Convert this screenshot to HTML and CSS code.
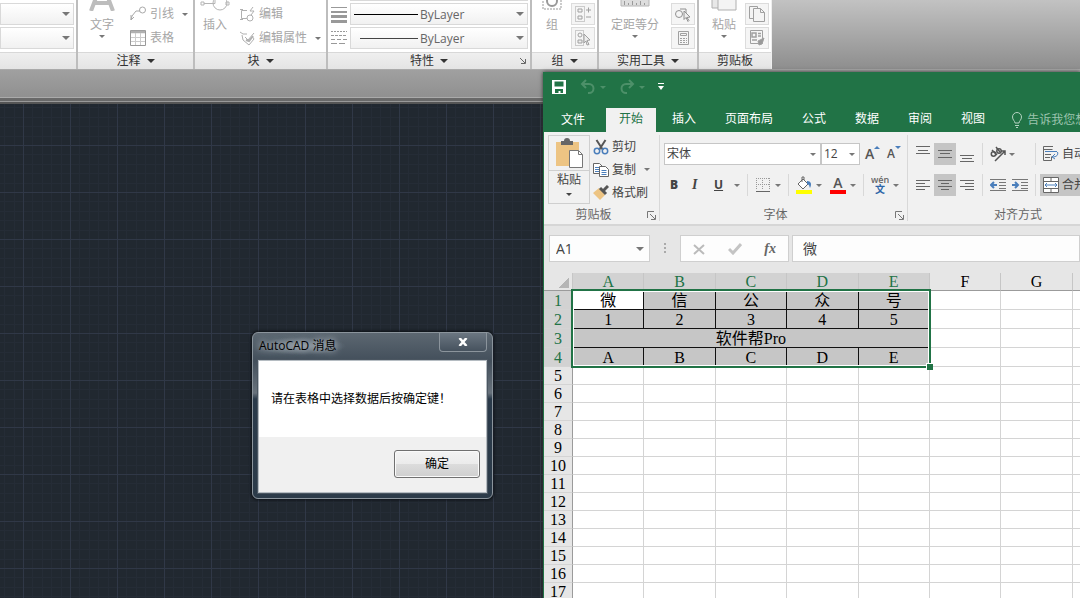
FILE: index.html
```html
<!DOCTYPE html>
<html lang="zh-CN">
<head>
    <meta charset="UTF-8">
    <meta name="viewport" content="width=device-width, initial-scale=1.0">
    <title>AutoCAD</title>
    <link rel="stylesheet" href="styles.css">
</head>
<body>
    <div class="cad">
        <div class="cad-ribbon">
            <section class="panel panel-layer">
                <div class="panel-body stack">
                    <div class="combo"><select aria-label="图层状态"><option></option></select><i class="caret big"></i></div>
                    <div class="combo"><select aria-label="图层"><option></option></select><i class="caret big"></i></div>
                </div>
                <div class="panel-title"></div>
            </section>
            <section class="panel panel-note">
                <div class="panel-body">
                    <button class="large">
                        <svg width="26" height="24" viewBox="0 0 26 24"><path d="M2 24L11 0h4l9 24M6 16h14" fill="none" stroke="#bdbdbd" stroke-width="4"/></svg>
                        <span>文字</span><i class="caret"></i>
                    </button>
                    <div class="small-list">
                        <button class="small">
                            <svg width="16" height="16" viewBox="0 0 16 16" fill="none" stroke="#a8a8a8"><path d="M1 14l1-4 4-5h4M1 14V9M1 14l3-3"/><circle cx="12.500" cy="4" r="3"/></svg>
                            <span>引线</span><i class="caret"></i>
                        </button>
                        <button class="small">
                            <svg width="16" height="16" viewBox="0 0 16 16" fill="none" stroke="#b0b0b0"><path d="M.5.5h15v15H.5z" stroke="#999"/><path d="M1 2h14" stroke-width="2.500"/><path d="M1 7.500h14M1 11.500h14M5.500 3v12M10.500 3v12" stroke="#ccc"/></svg>
                            <span>表格</span>
                        </button>
                    </div>
                </div>
                <div class="panel-title">注释<i class="caret big"></i></div>
            </section>
            <section class="panel panel-block">
                <div class="panel-body">
                    <button class="large">
                        <svg width="30" height="24" viewBox="0 0 30 24" fill="none" stroke="#b5b5b5"><path d="M1 15h3v3H1zM26 15h3v3h-3zM4 16.500h11V10"/><circle cx="20" cy="16" r="7"/></svg>
                        <span>插入</span><i class="caret none"></i>
                    </button>
                    <div class="small-list">
                        <button class="small">
                            <svg width="16" height="16" viewBox="0 0 16 16" fill="none" stroke="#b0b0b0"><path d="M8 4.500H2.500v8H8M1 3.500h3M1 13.500h3M14 1l-3 4h4l-3 4"/><circle cx="11" cy="12" r="3"/></svg>
                            <span>编辑</span>
                        </button>
                        <button class="small">
                            <svg width="16" height="16" viewBox="0 0 16 16" fill="none" stroke="#b0b0b0"><path d="M1 2l3 2h4M3 5l1 5 6 5 5-6-2-3M6 7l3 3 6-7"/><path d="M7 10l3 1 4-5" stroke-width="2"/></svg>
                            <span>编辑属性</span><i class="caret"></i>
                        </button>
                    </div>
                </div>
                <div class="panel-title">块<i class="caret big"></i></div>
            </section>
            <section class="panel panel-prop">
                <div class="panel-body stack">
                    <div class="prop-row"><svg width="16" height="22"></svg><div class="combo"></div></div>
                    <div class="prop-row">
                        <svg width="16" height="22" viewBox="0 0 16 22" stroke="#999"><path d="M0 4.500h16"/><path d="M0 9h16" stroke-width="2"/><path d="M0 13.500h16" stroke-width="3"/><path d="M0 18.500h16" stroke-width="3"/></svg>
                        <div class="combo"><span class="weight"></span><select aria-label="线宽"><option>ByLayer</option></select><i class="caret big"></i></div>
                    </div>
                    <div class="prop-row">
                        <svg width="16" height="22" viewBox="0 0 16 22" stroke="#999"><path d="M0 4.500h16" stroke-dasharray="2 1"/><path d="M0 8.500h16" stroke-dasharray="3 1"/><path d="M0 12.500h16" stroke-dasharray="4 2"/><path d="M0 16.500h16" stroke-dasharray="6 2"/></svg>
                        <div class="combo"><span class="weight thin"></span><select aria-label="线型"><option>ByLayer</option></select><i class="caret big"></i></div>
                    </div>
                </div>
                <div class="panel-title">特性<i class="caret big"></i>
                    <svg class="launch" width="6" height="6" viewBox="0 0 6 6" fill="none" stroke="#666"><path d="M0 0l5 5M5.500 1v4.500H1"/></svg>
                </div>
            </section>
            <section class="panel panel-group">
                <div class="panel-body">
                    <button class="large">
                        <svg width="20" height="24" viewBox="0 0 20 24" fill="none" stroke="#999"><path d="M1 2v20h18V2" stroke-dasharray="2 1"/><circle cx="10" cy="14" r="5" stroke-width="2"/></svg>
                        <span>组</span><i class="caret none"></i>
                    </button>
                    <div class="tool-list">
                        <button class="tool" aria-label="组编辑"><svg width="16" height="16" viewBox="0 0 16 16" fill="none" stroke="#a0a0a0"><path d="M.5.5h9v15h-9z" stroke-dasharray="1 1"/><path d="M3 3h4v3H3zM3 10h4v3H3zM11 4h5M13.500 1.500v5M11 11h5"/></svg></button>
                        <button class="tool" aria-label="组选择"><svg width="16" height="16" viewBox="0 0 16 16" fill="none" stroke="#a0a0a0"><path d="M.5.5h8v15h-8z" stroke-dasharray="1 1"/><circle cx="5" cy="5" r="2"/><path d="M3 10h4v3H3zM9 4l6 6-3 .5 2 4-2 .5-1-4-2 2z" fill="#eee"/></svg></button>
                    </div>
                </div>
                <div class="panel-title">组<i class="caret big"></i></div>
            </section>
            <section class="panel panel-util">
                <div class="panel-body">
                    <button class="large">
                        <svg width="30" height="24" viewBox="0 0 30 24"><path d="M1 8h28v11H1z" fill="#ddd" stroke="#b5b5b5"/><path d="M4.500 14v4M8.500 16v2M12.500 14v4M16.500 16v2M20.500 14v4M24.500 16v2" stroke="#999"/></svg>
                        <span>定距等分</span><i class="caret"></i>
                    </button>
                    <div class="tool-list">
                        <button class="tool" aria-label="快速选择"><svg width="16" height="16" viewBox="0 0 16 16" fill="none" stroke="#909090"><path d="M5 3h6v6"/><circle cx="4" cy="8" r="3.500"/><path d="M9 5l6 6-3 .5 2 3-1 1-2-4-2 2z" fill="#eee"/></svg></button>
                        <button class="tool" aria-label="计算器"><svg width="16" height="16" viewBox="0 0 16 16" fill="none" stroke="#a0a0a0"><path d="M3.500 1.500h10v13h-10zM5.500 3.500h6v2h-6z"/><path d="M5 8.500h7M5 10.500h7M5 12.500h7" stroke-dasharray="2 1"/></svg></button>
                    </div>
                </div>
                <div class="panel-title">实用工具<i class="caret big"></i></div>
            </section>
            <section class="panel panel-clip">
                <div class="panel-body">
                    <button class="large">
                        <svg width="26" height="24" viewBox="0 0 26 24" fill="#e8e8e8" stroke="#b0b0b0"><path d="M1 5h16v16H1z"/><path d="M7 10h18v13H7z" fill="#f4f4f4"/></svg>
                        <span>粘贴</span><i class="caret"></i>
                    </button>
                    <div class="tool-list">
                        <button class="tool" aria-label="复制"><svg width="16" height="16" viewBox="0 0 16 16" fill="#f4f4f4" stroke="#a0a0a0"><path d="M.5.500h8v12h-8z"/><path d="M4.500 2.500h7l4 4v9h-11zM11.500 2.500v4h4"/></svg></button>
                        <button class="tool" aria-label="特性匹配"><svg width="16" height="16" viewBox="0 0 16 16" fill="none" stroke="#a0a0a0"><path d="M1.500.5h12v13h-12z"/><path d="M3 3h4v4H3zM9 3.500h3M9 6h3M3 10h5" stroke-width="1.500"/><path d="M15 8l-6 3 1 4 3-1z" fill="#999"/></svg></button>
                    </div>
                </div>
                <div class="panel-title">剪贴板</div>
            </section>
        </div>
        <div class="cad-bar"></div>
        <div class="cad-canvas"></div>
    </div>

    <div class="dialog" role="dialog" aria-labelledby="dialog-title">
        <div class="dialog-head">
            <h1 id="dialog-title">AutoCAD 消息</h1>
            <button class="dialog-close" aria-label="关闭">
                <svg width="10" height="8" viewBox="0 0 10 8"><path d="M1.500 0L8.500 8M8.500 0L1.500 8" stroke="#fff" stroke-width="2.500"/></svg>
            </button>
        </div>
        <div class="dialog-body">
            <p>请在表格中选择数据后按确定键！</p>
            <div class="dialog-foot"><button class="ok">确定</button></div>
        </div>
    </div>

    <div class="excel">
        <div class="quick">
            <button aria-label="保存"><svg width="16" height="16" viewBox="0 0 16 16"><path d="M1 1h14v14H1z" fill="#fff"/><path d="M3.500 2.500h9v5h-9zM4 10h8v4H9.500v-2h-2v2H4z" fill="#217346"/></svg></button>
            <button class="dim" aria-label="撤消"><svg width="16" height="16" viewBox="0 0 16 16" fill="none" stroke="#4d9069" stroke-width="2"><path d="M6 1L2 5l4 4M2 5h7a4 4 0 010 9H8"/></svg><i class="caret"></i></button>
            <button class="dim" aria-label="恢复"><svg width="16" height="16" viewBox="0 0 16 16" fill="none" stroke="#4d9069" stroke-width="2"><path d="M10 1l4 4-4 4M14 5H7a4 4 0 000 9h1"/></svg><i class="caret"></i></button>
            <button class="custom" aria-label="自定义快速访问工具栏"><svg width="6" height="8" viewBox="0 0 6 8"><path d="M0 .5h6" stroke="#fff"/><path d="M0 3h6L3 7z" fill="#fff"/></svg></button>
        </div>
        <nav class="tabs">
            <button class="file">文件</button>
            <button class="active">开始</button>
            <button>插入</button>
            <button>页面布局</button>
            <button>公式</button>
            <button>数据</button>
            <button>审阅</button>
            <button>视图</button>
            <button class="tell"><svg width="10" height="16" viewBox="0 0 10 16" fill="none" stroke="#b5d3c2"><path d="M3 11c0-2-2.500-3-2.500-6a4.500 4.500 0 019 0c0 3-2.500 4-2.500 6zM3 13.500h4M4 15.500h2"/></svg><span>告诉我您想要做什么...</span></button>
        </nav>
        <div class="ribbon">
            <section class="group group-clip">
                <div class="group-body">
                    <button class="paste">
                        <span class="paste-icon"><svg width="30" height="30" viewBox="0 0 30 30"><path d="M2 4h23v24H2z" fill="#edc483"/><path d="M7 7V3h3a3 3 0 016 0h3v4z" fill="#666"/><path d="M15.500 12.500h9l4 4v13h-13z" fill="#fff" stroke="#777"/><path d="M24.500 12.500v4h4" fill="none" stroke="#777"/></svg></span>
                        <span>粘贴</span><i class="caret dark"></i>
                    </button>
                    <div class="clip-list">
                        <button><svg width="16" height="16" viewBox="0 0 16 16" fill="none"><path d="M3.500 1L10 11M12.500 1L6 11" stroke="#555" stroke-width="2"/><circle cx="4" cy="12" r="2.700" stroke="#4a7ebb" stroke-width="1.500"/><circle cx="12" cy="12" r="2.700" stroke="#4a7ebb" stroke-width="1.500"/></svg><span>剪切</span></button>
                        <button><svg width="16" height="16" viewBox="0 0 16 16" fill="#fff" stroke="#666"><path d="M.5 1.500h6l3 3v7h-9z"/><path d="M2 5.500h4M2 7.500h4M2 9.500h4" stroke="#4a7ebb"/><path d="M6.500 4.500h6l3 3v7h-9z"/><path d="M8.500 8.500h5M8.500 10.500h5M8.500 12.500h5" stroke="#4a7ebb"/></svg><span>复制</span><i class="caret"></i></button>
                        <button><svg width="16" height="16" viewBox="0 0 16 16"><path d="M6 3l6 7-5 5L0 8z" fill="#edc483"/><path d="M7 3l6 6" stroke="#555" stroke-width="3"/><path d="M10 6l5-5" stroke="#555" stroke-width="3"/></svg><span>格式刷</span></button>
                    </div>
                </div>
                <div class="group-label"><span>剪贴板</span><svg width="9" height="9" viewBox="0 0 9 9" fill="none" stroke="#777"><path d="M.5 7V.5H7M3 3l5 5M8.500 4v4.500H4"/></svg></div>
            </section>
            <section class="group group-font">
                <div class="group-body rows">
                    <div class="row">
                        <div class="box font-name"><select aria-label="字体"><option>宋体</option></select><i class="caret"></i></div>
                        <div class="box font-size"><select aria-label="字号"><option>12</option></select><i class="caret"></i></div>
                        <button class="grow" aria-label="增大字号"><b>A</b><i class="up"></i></button>
                        <button class="grow shrink" aria-label="减小字号"><b>A</b><i class="down"></i></button>
                    </div>
                    <div class="row styles">
                        <button class="letter"><b>B</b></button>
                        <button class="letter italic"><b>I</b></button>
                        <button class="letter"><u>U</u></button>
                        <i class="caret"></i><i class="sep"></i>
                        <button aria-label="边框"><svg width="16" height="16" viewBox="0 0 16 16" stroke="#999"><path d="M1 1.500h14M1 7.500h14M1.500 1v12M7.500 1v12M14.500 1v12" stroke-dasharray="1 1"/><path d="M1 14.500h14" stroke="#666"/></svg></button>
                        <i class="caret"></i><i class="sep"></i>
                        <button aria-label="填充颜色"><svg width="16" height="18" viewBox="0 0 16 18"><path d="M2 8l5-5 5 5-5 5z" fill="#fff" stroke="#666"/><path d="M6 6V1h2v3" fill="none" stroke="#666"/><path d="M11 5c4 0 5 3 3 7-1-2 0-3-3-4z" fill="#4a7ebb"/><path d="M0 14h16v4H0z" fill="#ff0"/></svg></button>
                        <i class="caret"></i>
                        <button class="color" aria-label="字体颜色"><b>A</b></button>
                        <i class="caret"></i><i class="sep"></i>
                        <button class="pinyin" aria-label="拼音"><svg width="18" height="18" viewBox="0 0 18 18"><text x="9" y="7" text-anchor="middle" font-size="9" font-weight="600" fill="#666">wén</text><text x="9" y="17" text-anchor="middle" font-size="10" font-weight="bold" fill="#2e67a8">文</text></svg></button>
                        <i class="caret"></i>
                    </div>
                </div>
                <div class="group-label"><span>字体</span><svg width="9" height="9" viewBox="0 0 9 9" fill="none" stroke="#777"><path d="M.5 7V.5H7M3 3l5 5M8.500 4v4.500H4"/></svg></div>
            </section>
            <section class="group group-align">
                <div class="group-body rows">
                    <div class="row">
                        <button class="sq" aria-label="顶端对齐"><svg width="14" height="16" viewBox="0 0 14 16" stroke="#666"><path d="M0 .500h14M2 4.500h10M0 7.500h14"/></svg></button>
                        <button class="sq on" aria-label="垂直居中"><svg width="14" height="16" viewBox="0 0 14 16" stroke="#666"><path d="M0 4.500h14M2 7.500h10M0 11.500h14"/></svg></button>
                        <button class="sq" aria-label="底端对齐"><svg width="14" height="16" viewBox="0 0 14 16" stroke="#666"><path d="M0 9.500h14M2 12.500h10M0 15.500h14"/></svg></button>
                        <i class="sep"></i>
                        <button class="sq" aria-label="方向"><svg width="16" height="16" viewBox="0 0 16 16" fill="none" stroke="#555"><circle cx="3.500" cy="8" r="2.200" stroke-width="1.500"/><path d="M2 4l5 5M6 1l4 5M5 15L15 5M15 9V5h-4" stroke-width="1.500"/><circle cx="9" cy="5" r="2.200" stroke-width="1.500"/></svg></button>
                        <i class="caret"></i><i class="sep wide"></i>
                        <button class="text-btn"><svg width="16" height="16" viewBox="0 0 16 16" fill="none" stroke="#666"><path d="M10 .5H.5v14h8v-4M.5 3.500h9M2 8.500h6M2 11.500h5"/><path d="M2 5.500h12M14.500 6c1 3-1 5-5 5M12 8l-3 3 3 2" stroke="#4a7ebb"/></svg><span>自动换行</span></button>
                    </div>
                    <div class="row">
                        <button class="sq" aria-label="左对齐"><svg width="14" height="16" viewBox="0 0 14 16" stroke="#666"><path d="M0 3.500h14M0 6.500h9M0 9.500h14M0 12.500h9"/></svg></button>
                        <button class="sq on" aria-label="居中"><svg width="14" height="16" viewBox="0 0 14 16" stroke="#666"><path d="M0 3.500h14M3 6.500h8M0 9.500h14M3 12.500h8"/></svg></button>
                        <button class="sq" aria-label="右对齐"><svg width="14" height="16" viewBox="0 0 14 16" stroke="#666"><path d="M0 3.500h14M5 6.500h9M0 9.500h14M5 12.500h9"/></svg></button>
                        <i class="sep"></i>
                        <button class="sq" aria-label="减少缩进"><svg width="16" height="16" viewBox="0 0 16 16" fill="none" stroke="#777"><path d="M0 2.500h16M9 5.500h7M9 8.500h7M9 11.500h7M0 13.500h16"/><path d="M7 8H1M4 5L1 8l3 3" stroke="#4a7ebb" stroke-width="2"/></svg></button>
                        <button class="sq" aria-label="增加缩进"><svg width="16" height="16" viewBox="0 0 16 16" fill="none" stroke="#777"><path d="M0 2.500h16M9 5.500h7M9 8.500h7M9 11.500h7M0 13.500h16"/><path d="M0 8h6M3 5l3 3-3 3" stroke="#4a7ebb" stroke-width="2"/></svg></button>
                        <i class="sep"></i>
                        <button class="text-btn on"><svg width="16" height="16" viewBox="0 0 16 16" fill="#fff" stroke="#666"><path d="M.5.500h15v15H.5zM.5 4.500h15M.5 11.500h15M8 .5v4M8 11.500v4"/><path d="M2 8h12M4 6L2 8l2 2M12 6l2 2-2 2" fill="none" stroke="#4a7ebb"/></svg><span>合并后居中</span></button>
                    </div>
                </div>
                <div class="group-label"><span>对齐方式</span></div>
            </section>
        </div>
        <div class="formula">
            <div class="name-box"><input type="text" value="A1" aria-label="名称框"><i class="caret big"></i></div>
            <span class="dots"></span>
            <div class="fx">
                <button aria-label="取消"><svg width="12" height="12" viewBox="0 0 12 12"><path d="M1 2l10 9M11 2L1 11" stroke="#bbb" stroke-width="2"/></svg></button>
                <button aria-label="输入"><svg width="14" height="12" viewBox="0 0 14 12" fill="none"><path d="M1 6l4 4 8-9" stroke="#c4c4c4" stroke-width="3"/></svg></button>
                <button class="fn">fx</button>
            </div>
            <input class="formula-input" type="text" value="微" aria-label="编辑栏">
        </div>
        <div class="sheet">
            <table>
                <thead>
                    <tr><th class="corner"></th><th class="sel">A</th><th class="sel">B</th><th class="sel">C</th><th class="sel">D</th><th class="sel">E</th><th>F</th><th>G</th><th>H</th></tr>
                </thead>
                <tbody>
                    <tr class="data"><th>1</th><td class="cell current">微</td><td class="cell">信</td><td class="cell">公</td><td class="cell">众</td><td class="cell">号</td><td></td><td></td><td></td></tr>
                    <tr class="data"><th>2</th><td class="cell">1</td><td class="cell">2</td><td class="cell">3</td><td class="cell">4</td><td class="cell">5</td><td></td><td></td><td></td></tr>
                    <tr class="data"><th>3</th><td class="cell" colspan="5">软件帮Pro</td><td></td><td></td><td></td></tr>
                    <tr class="data"><th>4</th><td class="cell">A</td><td class="cell">B</td><td class="cell">C</td><td class="cell">D</td><td class="cell">E</td><td></td><td></td><td></td></tr>
                    <tr><th>5</th><td></td><td></td><td></td><td></td><td></td><td></td><td></td><td></td></tr>
                    <tr><th>6</th><td></td><td></td><td></td><td></td><td></td><td></td><td></td><td></td></tr>
                    <tr><th>7</th><td></td><td></td><td></td><td></td><td></td><td></td><td></td><td></td></tr>
                    <tr><th>8</th><td></td><td></td><td></td><td></td><td></td><td></td><td></td><td></td></tr>
                    <tr><th>9</th><td></td><td></td><td></td><td></td><td></td><td></td><td></td><td></td></tr>
                    <tr><th>10</th><td></td><td></td><td></td><td></td><td></td><td></td><td></td><td></td></tr>
                    <tr><th>11</th><td></td><td></td><td></td><td></td><td></td><td></td><td></td><td></td></tr>
                    <tr><th>12</th><td></td><td></td><td></td><td></td><td></td><td></td><td></td><td></td></tr>
                    <tr><th>13</th><td></td><td></td><td></td><td></td><td></td><td></td><td></td><td></td></tr>
                    <tr><th>14</th><td></td><td></td><td></td><td></td><td></td><td></td><td></td><td></td></tr>
                    <tr><th>15</th><td></td><td></td><td></td><td></td><td></td><td></td><td></td><td></td></tr>
                    <tr><th>16</th><td></td><td></td><td></td><td></td><td></td><td></td><td></td><td></td></tr>
                    <tr><th>17</th><td></td><td></td><td></td><td></td><td></td><td></td><td></td><td></td></tr>
                </tbody>
            </table>
            <div class="selection"></div>
        </div>
    </div>
</body>
</html>
```
FILE: styles.css
```css
* {
    margin: 0;
    padding: 0;
    box-sizing: border-box;
}
body {
    position: relative;
    height: 100vh;
    overflow: hidden;
    font: 12px/16px "Open Sans", "Noto Sans CJK SC", sans-serif;
    color: #333;
}
button, input, select {
    font: inherit;
    color: inherit;
    background: none;
    border: none;
    outline: none;
    appearance: none;
}
button {
    display: flex;
    align-items: center;
    white-space: nowrap;
}
svg {
    display: block;
    flex: none;
}
.caret {
    flex: none;
    width: 0;
    height: 0;
    border: 3px solid transparent;
    border-top-color: #777;
    border-bottom: none;
}
.caret.big {
    border-width: 4px 4px 0;
}
.caret.dark {
    border-top-color: #444;
}
.caret.none {
    border-color: transparent;
}

/* CAD 主窗口 */
.cad {
    height: 100%;
    display: flex;
    flex-direction: column;
}
.cad-ribbon {
    height: 70px;
    flex: none;
    display: flex;
    background: linear-gradient(#c2c2c2, #8e8e8e);
    border-bottom: 1px solid #aaa;
}
.panel {
    display: flex;
    flex-direction: column;
    flex: none;
    background: #fff;
    border-right: 2px solid #bdbdbd;
    color: #a6a6a6;
}
.panel-layer { width: 78px; }
.panel-note { width: 117px; }
.panel-block { width: 133px; }
.panel-prop { width: 204px; }
.panel-group { width: 67px; }
.panel-util { width: 100px; }
.panel-clip {
    width: 73px;
    border-right: 1px solid #eee;
}
.panel-body {
    height: 52px;
    overflow: hidden;
    display: flex;
    align-items: flex-end;
    justify-content: space-between;
    padding: 0 2px 3px 12px;
}
.panel-body.stack {
    flex-direction: column;
    align-items: stretch;
    justify-content: flex-end;
    gap: 2px;
    padding: 0 2px 3px 0;
}
.panel-title {
    flex: 1;
    position: relative;
    display: flex;
    align-items: center;
    justify-content: center;
    gap: 6px;
    border-top: 1px solid #d8d8d8;
    background: linear-gradient(#efefef, #e4e4e4);
    color: #333;
}
.panel-title .caret {
    border-top-color: #333;
}
.launch {
    position: absolute;
    right: 4px;
    bottom: 5px;
}
.large {
    flex-direction: column;
    padding-bottom: 11px;
}
.large svg {
    margin-bottom: 6px;
}
.large .caret {
    margin-top: 2px;
}
.panel-note .panel-body {
    justify-content: flex-start;
    gap: 15px;
    padding-left: 11px;
}
.panel-block .panel-body {
    justify-content: flex-start;
    gap: 9px;
    padding-left: 5px;
}
.panel-group .panel-body {
    padding-left: 10px;
}
.small {
    height: 24px;
    gap: 4px;
    padding-top: 2px;
}
.small .caret {
    margin-left: 4px;
}
.tool-list {
    display: flex;
    flex-direction: column;
    gap: 2px;
}
.tool {
    width: 24px;
    height: 22px;
    justify-content: center;
    border: 1px solid #dcdcdc;
    background: #f5f5f5;
}
.combo {
    flex: 1;
    height: 22px;
    display: flex;
    align-items: center;
    padding-right: 3px;
    border: 1px solid #d9d9d9;
    background: linear-gradient(#fff, #f1f1f1);
    color: #666;
}
.stack > .combo {
    flex: none;
}
.combo select {
    flex: 1;
    min-width: 0;
    padding-top: 1px;
}
.prop-row {
    flex: none;
    display: flex;
    gap: 3px;
    padding-left: 3px;
}
.weight {
    width: 64px;
    height: 1px;
    margin: 0 2px 0 3px;
    background: #000;
}
.weight.thin {
    width: 58px;
    margin-left: 9px;
    background: #444;
}
.cad-bar {
    height: 34px;
    flex: none;
    background: linear-gradient(#a0a0a0, #909090 27px, #aaa 27px, #aaa 28px, #696969 28px, #696969 31px, #999 31px, #999 32px, #555 32px);
}
.cad-canvas {
    flex: 1;
    background-color: #212830;
    background-image:
        linear-gradient(#303847 1px, transparent 1px),
        linear-gradient(90deg, #303847 1px, transparent 1px),
        linear-gradient(transparent 9px, #252c36 9px, #252c36 10px, transparent 10px, transparent 19px, #252c36 19px, #252c36 20px, transparent 20px, transparent 28px, #252c36 28px, #252c36 29px, transparent 29px, transparent 38px, #252c36 38px, #252c36 39px, transparent 39px),
        linear-gradient(90deg, transparent 9px, #252c36 9px, #252c36 10px, transparent 10px, transparent 19px, #252c36 19px, #252c36 20px, transparent 20px, transparent 28px, #252c36 28px, #252c36 29px, transparent 29px, transparent 38px, #252c36 38px, #252c36 39px, transparent 39px);
    background-size: 47px 47px;
    background-position: 23px 41px;
}

/* 消息框 */
.dialog {
    position: absolute;
    left: 252px;
    top: 332px;
    width: 241px;
    padding: 0 5px 5px;
    border: 1px solid #8b949c;
    border-radius: 6px;
    background: linear-gradient(#5c6771, #434f5b 28px, #68727c 60px, #2a3a4a 66px, #2c3b49);
    box-shadow: 0 0 3px 1px #0c1015;
}
.dialog-head {
    display: flex;
    justify-content: space-between;
    align-items: flex-start;
    height: 27px;
}
.dialog-head h1 {
    padding: 0 10px 0 1px;
    margin-top: 4px;
    font-size: 12px;
    font-weight: normal;
    line-height: 18px;
    color: #000;
    background: radial-gradient(closest-side, #8b959e, transparent);
    text-shadow: 0 0 6px #aab2ba, 0 0 8px #aab2ba;
}
.dialog-close {
    width: 48px;
    height: 19px;
    justify-content: center;
    border: 1px solid #8b949c;
    border-top: none;
    border-radius: 0 0 4px 4px;
    background: linear-gradient(#6b7681, #46525e);
}
.dialog-body {
    border: 1px solid #b5bcc2;
    outline: 1px solid #4b5661;
    background: #f0f0f0;
}
.dialog-body p {
    height: 76px;
    padding: 30px 12px;
    background: #fff;
    color: #000;
}
.dialog-foot {
    display: flex;
    justify-content: flex-end;
    padding: 13px 6px 14px;
}
.ok {
    width: 86px;
    height: 28px;
    justify-content: center;
    border: 1px solid #707070;
    border-radius: 3px;
    background: linear-gradient(#f3f3f3, #ebebeb 50%, #dcdcdc 50%, #cfcfcf);
    box-shadow: inset 0 0 0 1px #fafafa;
    color: #000;
}

/* 表格窗口 */
.excel {
    position: absolute;
    left: 543px;
    right: 0;
    top: 72px;
    bottom: 0;
    overflow: hidden;
    display: flex;
    flex-direction: column;
    border-left: 1px solid #217346;
    background: #e6e6e6;
    box-shadow: 0 0 4px #333;
    color: #444;
}
.quick {
    height: 36px;
    flex: none;
    display: flex;
    align-items: center;
    gap: 13px;
    padding: 0 7px 6px;
    background: #217346;
}
.quick button {
    gap: 4px;
}
.quick .caret {
    border-top-color: #4d9069;
}
.tabs {
    height: 24px;
    flex: none;
    display: flex;
    gap: 3px;
    background: #217346;
    color: #fff;
}
.tabs button {
    flex: none;
    padding: 0 13px 2px;
}
.tabs .file {
    padding: 0 18px 0 17px;
}
.tabs .active {
    background: #f1f1f1;
    color: #217346;
}
.tabs .tell {
    gap: 5px;
    padding: 0 11px;
    color: #9cc4ae;
}
.ribbon {
    flex: none;
    height: 94px;
    display: flex;
    background: #f1f1f1;
    border-bottom: 2px solid #d6d6d6;
}
.group {
    flex: none;
    display: flex;
    flex-direction: column;
    justify-content: space-between;
    padding-top: 3px;
    border-right: 1px solid #d8d8d8;
    border-image: linear-gradient(transparent 4px, #d8d8d8 4px, #d8d8d8 88px, transparent 88px) 1;
}
.group-clip { width: 116px; }
.group-font { width: 248px; }
.group-align { width: 224px; }
.group-body {
    display: flex;
}
.group-label {
    display: flex;
    align-items: center;
    gap: 4px;
    height: 18px;
    padding-right: 3px;
    color: #666;
}
.group-label span {
    flex: 1;
    text-align: center;
}
.paste {
    width: 42px;
    height: 69px;
    margin-left: 4px;
    flex-direction: column;
    border: 1px solid #cfcfcf;
}
.paste-icon {
    width: 100%;
    height: 35px;
    display: flex;
    align-items: center;
    justify-content: center;
    margin-bottom: 1px;
    border-bottom: 1px solid #cfcfcf;
}
.paste .caret {
    margin-top: 5px;
}
.clip-list {
    padding-left: 3px;
}
.clip-list button {
    height: 23px;
    gap: 3px;
}
.clip-list .caret {
    margin-left: 5px;
}
.rows {
    flex-direction: column;
    gap: 9px;
    padding: 8px 4px 0;
}
.row {
    height: 22px;
    display: flex;
    align-items: center;
}
.row > * {
    flex: none;
}
.box {
    height: 22px;
    display: flex;
    align-items: center;
    border: 1px solid #c6c6c6;
    background: #fff;
    padding: 0 4px 0 2px;
}
.box select {
    flex: 1;
    min-width: 0;
}
.font-name { width: 157px; }
.font-size {
    width: 39px;
    margin-right: 5px;
}
.grow {
    width: 22px;
    font-size: 14px;
    color: #555;
}
.grow.shrink {
    width: 16px;
    font-size: 12px;
}
.grow b, .color b {
    font-weight: 600;
}
.up, .down {
    align-self: flex-start;
    border: 3px solid transparent;
}
.up {
    border-top: none;
    border-bottom-color: #4a7ebb;
}
.down {
    border-bottom: none;
    border-top-color: #4a7ebb;
}
.styles .caret {
    margin: 0 5px 0 4px;
}
.styles .sep {
    margin: 0 7px 0 2px;
}
.letter {
    width: 22px;
    padding-left: 6px;
    font-weight: bold;
}
.italic {
    font-family: "Liberation Serif", serif;
    font-style: italic;
    font-size: 14px;
}
.color {
    width: 16px;
    height: 18px;
    margin-left: 3px;
    justify-content: center;
    border-bottom: 4px solid #f00;
    font-size: 14px;
    color: #555;
}
.sep {
    width: 1px;
    height: 22px;
    margin: 0 4px;
    background: #d8d8d8;
}
.sq {
    width: 22px;
    height: 22px;
    justify-content: center;
}
.on {
    background: #c5c5c5;
}
.sep.wide {
    margin-left: 20px;
}
.text-btn {
    height: 22px;
    padding: 0 3px;
    gap: 3px;
}
.formula {
    flex: none;
    height: 47px;
    display: flex;
    padding: 9px 0 11px 5px;
}
.name-box, .fx, .formula-input {
    border: 1px solid #cfcfcf;
    background: #fdfdfd;
}
.name-box {
    width: 101px;
    display: flex;
    align-items: center;
    padding: 0 5px 0 6px;
}
.name-box input {
    flex: 1;
    min-width: 0;
    font-size: 14px;
}
.dots {
    width: 2px;
    height: 11px;
    margin: 8px 14px;
    background: repeating-linear-gradient(#aaa, #aaa 2px, transparent 2px, transparent 4px);
}
.fx {
    width: 109px;
    display: flex;
    align-items: center;
    justify-content: space-between;
    padding: 0 12px;
}
.fn {
    font: italic bold 14px "Liberation Serif", serif;
    color: #666;
}
.formula-input {
    flex: 1;
    min-width: 0;
    margin-left: 3px;
    padding-left: 10px;
    font-size: 14px;
}
.sheet {
    flex: 1;
    position: relative;
}
table {
    width: 600px;
    table-layout: fixed;
    border-collapse: separate;
    border-spacing: 0;
    background: #fff;
    font: 16px/16px "Liberation Serif", "Noto Sans CJK SC", serif;
    color: #000;
    text-align: center;
}
th {
    font-weight: normal;
    background: #e6e6e6;
    border-right: 1px solid #c6c6c6;
    border-bottom: 1px solid #c6c6c6;
}
thead th {
    height: 18px;
    border-bottom-color: #9b9b9b;
    padding-top: 1px;
}
.corner {
    width: 29px;
    background: linear-gradient(135deg, transparent 50%, #b5b5b5 50%) no-repeat 15px 5px / 10px 10px #e6e6e6;
}
td, tbody th {
    height: 18px;
    border-bottom: 1px solid #d4d4d4;
    padding-top: 1px;
}
td {
    border-right: 1px solid #d4d4d4;
}
tbody th {
    border-right-color: #9b9b9b;
}
.data td, .data th {
    height: 19px;
}
.sel, .data th {
    background: #d2d2d2;
    color: #217346;
}
.data .cell {
    background: #c6c6c6;
    border-color: #111;
}
.data .current {
    background: #fff;
}
.selection {
    position: absolute;
    left: 27px;
    top: 16px;
    width: 360px;
    height: 79px;
    border: 2px solid #217346;
    box-shadow: inset 0 0 0 1px #fff;
}
.selection::after {
    content: "";
    position: absolute;
    right: -4px;
    bottom: -4px;
    width: 6px;
    height: 6px;
    border: solid #fff;
    border-width: 1px 0 0 1px;
    background: #217346;
}
```
